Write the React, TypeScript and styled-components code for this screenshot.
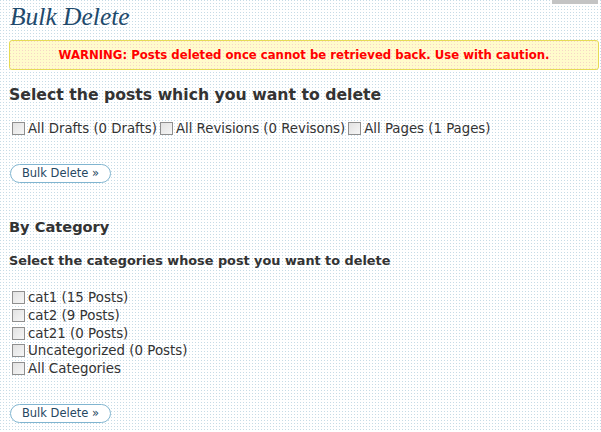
import React from "react";
import styled, { createGlobalStyle } from "styled-components";

const GlobalStyle = createGlobalStyle`
  html, body {
    margin: 0;
    padding: 0;
  }
  body {
    width: 601px;
    height: 432px;
    overflow: hidden;
    font-family: "DejaVu Sans", Verdana, sans-serif;
    color: #333;
    background-color: #fff;
    background-image: conic-gradient(at 1px 1px, transparent 75%, #c6dbe6 0);
    background-size: 3px 3px;
  }
`;

const Wrap = styled.div`
  position: relative;
  padding: 2px 2px 0 9px;
`;

const ScreenTab = styled.div`
  position: absolute;
  top: 0;
  right: 3px;
  width: 46px;
  height: 4px;
  background: #c4c4c4;
`;

const Title = styled.h2`
  margin: 0;
  font-family: "Liberation Serif", Georgia, serif;
  font-style: italic;
  font-weight: normal;
  font-size: 25.5px;
  line-height: 30px;
  color: #1f4a6c;
  padding-left: 1px;
`;

const Warning = styled.div`
  margin: 8px 0 0;
  height: 28px;
  border: 1px solid #e6db55;
  border-radius: 3px;
  background-color: #fffbcc;
  background-image: conic-gradient(at 1px 1px, transparent 75%, #f6d6c6 0);
  background-size: 3px 3px;
  display: flex;
  align-items: center;
  justify-content: center;
  color: #f00;
  font-weight: bold;
  font-size: 11.7px;
`;

const Heading = styled.h3<{ $size: number; $top: number }>`
  margin: ${(p) => p.$top}px 0 0;
  font-size: ${(p) => p.$size}px;
  font-weight: bold;
  color: #333;
  line-height: 20px;
`;

const Row = styled.div`
  display: flex;
  align-items: center;
  margin-top: 15px;
  padding-left: 3px;
  gap: 3px;
  font-size: 13.3px;
`;

const List = styled.div`
  display: flex;
  flex-direction: column;
  margin-top: 18px;
  padding-left: 3px;
  font-size: 13.4px;
`;

const Item = styled.label`
  display: flex;
  align-items: center;
  height: 17.75px;
  gap: 3px;
`;

const Box = styled.input.attrs({ type: "checkbox" })`
  appearance: none;
  margin: 0;
  width: 13px;
  height: 13px;
  border: 1px solid #8f8f8f;
  background: linear-gradient(135deg, #e2e2e2, #f6f6f6);
  box-sizing: border-box;
`;

const Button = styled.button<{ $top: number }>`
  display: block;
  margin: ${(p) => p.$top}px 0 0 1px;
  height: 19px;
  width: 101px;
  padding: 0;
  border: 1px solid #80b5d0;
  border-radius: 10px;
  background: #fff;
  color: #264761;
  font-family: "DejaVu Sans", Verdana, sans-serif;
  font-size: 11.5px;
  cursor: pointer;
`;

const posts = [
  "All Drafts (0 Drafts)",
  "All Revisions (0 Revisons)",
  "All Pages (1 Pages)",
];

const cats = [
  "cat1 (15 Posts)",
  "cat2 (9 Posts)",
  "cat21 (0 Posts)",
  "Uncategorized (0 Posts)",
  "All Categories",
];

export default function App() {
  return (
    <>
      <GlobalStyle />
      <Wrap>
        <ScreenTab />
        <Title>Bulk Delete</Title>
        <Warning>
          WARNING: Posts deleted once cannot be retrieved back. Use with caution.
        </Warning>
        <Heading $size={15.7} $top={15}>
          Select the posts which you want to delete
        </Heading>
        <Row>
          {posts.map((p) => (
            <Item key={p}>
              <Box />
              {p}
            </Item>
          ))}
        </Row>
        <Button $top={26}>Bulk Delete »</Button>
        <Heading $size={14.6} $top={34}>
          By Category
        </Heading>
        <Heading $size={12.83} $top={14}>
          Select the categories whose post you want to delete
        </Heading>
        <List>
          {cats.map((c) => (
            <Item key={c}>
              <Box />
              {c}
            </Item>
          ))}
        </List>
        <Button $top={26}>Bulk Delete »</Button>
      </Wrap>
    </>
  );
}
